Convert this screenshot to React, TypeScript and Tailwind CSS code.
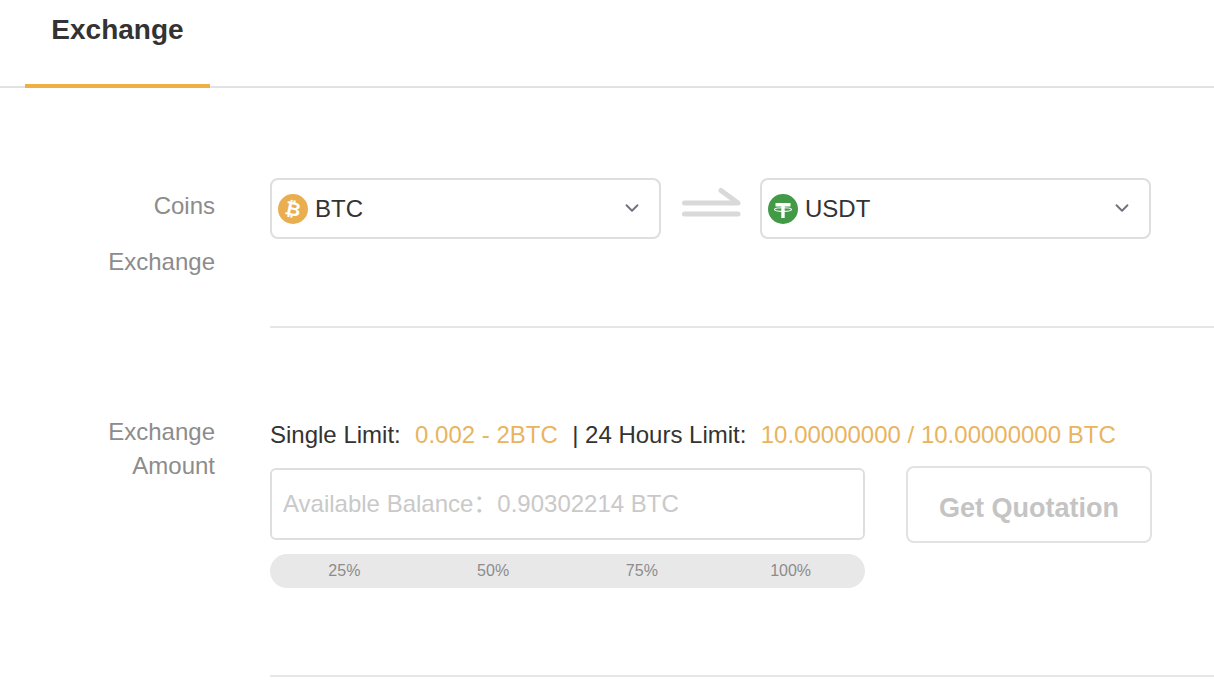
import { ChevronDown } from 'lucide-react'

function BtcIcon() {
  return (
    <svg viewBox="0 0 30 30" className="w-[30px] h-[30px] shrink-0">
      <circle cx="15" cy="15" r="15" fill="#e9ae50" />
      <text
        x="15"
        y="21.5"
        textAnchor="middle"
        transform="rotate(12 15 15)"
        fontSize="19"
        fontWeight="700"
        fontFamily="Liberation Sans, sans-serif"
        fill="#ffffff"
      >
        ₿
      </text>
    </svg>
  )
}

function UsdtIcon() {
  return (
    <svg viewBox="0 0 30 30" className="w-[30px] h-[30px] shrink-0">
      <circle cx="15" cy="15" r="15" fill="#429a47" />
      <path d="M7.5 9h15v3.4h-5.8V24h-3.4V12.4H7.5z" fill="#ffffff" />
      <ellipse cx="15" cy="15.6" rx="8.5" ry="1.8" fill="none" stroke="#ffffff" strokeWidth="1.1" />
    </svg>
  )
}

function CoinSelect({ icon, name }: { icon: React.ReactNode; name: string }) {
  return (
    <div className="flex items-center w-[391px] h-[61px] pl-1.5 pr-4 bg-white border-2 border-[#dedede] rounded-lg">
      {icon}
      <span className="ml-[7px] text-2xl text-[#333333]">{name}</span>
      <ChevronDown className="w-[22px] h-[22px] ml-auto -mt-0.5 text-[#70707c]" strokeWidth={2} />
    </div>
  )
}

export default function App() {
  return (
    <div className="w-[1214px] h-[680px] overflow-hidden bg-white font-['Liberation_Sans','Noto_Sans_CJK_SC',sans-serif]">
      <div className="h-[88px] border-b-2 border-[#e2e2e2]">
        <div className="ml-[25px] w-[185px] h-[88px] pt-3.5 border-b-4 border-[#eeb044] text-center text-[28px] leading-[32px] font-bold text-[#333333]">
          Exchange
        </div>
      </div>

      <div className="flex pt-[90px]">
        <div className="w-[215px] text-right text-2xl leading-[56px] text-[#8c8c8c]">
          <p>Coins</p>
          <p>Exchange</p>
        </div>
        <div className="flex-1 ml-[55px]">
          <div className="flex items-start h-[150px] border-b-2 border-[#e6e6e6]">
            <CoinSelect icon={<BtcIcon />} name="BTC" />
            <svg viewBox="0 0 60 32" className="w-[60px] h-8 ml-5 mr-[19px] mt-2">
              <path d="M3.5 17H57L40 4.5" fill="none" stroke="#d9d9d9" strokeWidth="5" strokeLinecap="round" strokeLinejoin="round" />
              <path d="M3.5 28H57" fill="none" stroke="#d9d9d9" strokeWidth="5" strokeLinecap="round" />
            </svg>
            <CoinSelect icon={<UsdtIcon />} name="USDT" />
          </div>
        </div>
      </div>

      <div className="flex pt-[87px]">
        <div className="w-[215px] text-right text-2xl leading-[34px] text-[#8c8c8c]">
          <p>Exchange</p>
          <p>Amount</p>
        </div>
        <div className="flex-1 ml-[55px]">
          <div className="h-[262px] pt-[3px] border-b-2 border-[#e6e6e6]">
            <div className="text-2xl leading-[34px] whitespace-pre text-[#333333]">
              <span>Single Limit:  </span>
              <span className="ml-px text-[#e9b45f]">0.002 - 2BTC</span>
              <span className="ml-px">  | 24 Hours Limit:  </span>
              <span className="ml-px text-[#e9b45f]">10.00000000 / 10.00000000 BTC</span>
            </div>
            <div className="flex items-start mt-4">
              <div className="w-[595px]">
                <div className="flex items-center h-[72px] px-[11px] border-2 border-[#dedede] rounded-md text-2xl text-[#c9c9c9]">
                  Available Balance：0.90302214 BTC
                </div>
                <div className="grid grid-cols-4 items-center h-[34px] mt-3.5 rounded-full bg-[#e8e8e8] text-base text-[#8c8c8c] text-center">
                  <span>25%</span>
                  <span>50%</span>
                  <span>75%</span>
                  <span>100%</span>
                </div>
              </div>
              <div className="flex items-center justify-center w-[246px] h-[77px] -mt-0.5 ml-[41px] pt-2 border-2 border-[#e2e2e2] rounded-lg text-[27px] font-bold text-[#c4c4c4]">
                Get Quotation
              </div>
            </div>
          </div>
        </div>
      </div>
    </div>
  )
}
